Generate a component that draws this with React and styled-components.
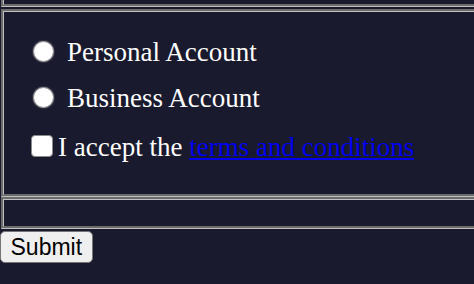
import styled, { createGlobalStyle } from "styled-components";

const GlobalStyle = createGlobalStyle`
  html, body {
    margin: 0;
    padding: 0;
    background: #1a1a2e;
    overflow: hidden;
  }
  body {
    font-family: "Liberation Serif", "Times New Roman", serif;
    color: #ffffff;
  }
`;

const Page = styled.form`
  width: 100%;
  display: flex;
  flex-direction: column;
  align-items: flex-start;
`;

// the section above is cut off by the screenshot, only its bottom edge shows
// right edges of the sections fall outside the shot, so no right border
const PrevSection = styled.div`
  align-self: stretch;
  height: 4px;
  margin-left: 1px;
  border-left: 3px groove #c0c0c0;
  border-bottom: 3px groove #c0c0c0;
`;

const Section = styled.fieldset`
  align-self: stretch;
  margin: ${(p) => p.$top || 0}px 0 0 1px;
  padding: ${(p) => (p.$empty ? "0" : "25px 0 31px 27px")};
  height: ${(p) => (p.$empty ? "26px" : "auto")};
  border: 3px groove #c0c0c0;
  border-right: none;
  min-width: 0;
  display: flex;
  flex-direction: column;
`;

const Option = styled.label`
  display: flex;
  align-items: center;
  gap: ${(p) => p.$gap}px;
  margin-top: ${(p) => p.$top || 0}px;
  height: 31px;
  font-size: 27px;
  line-height: 31px;
  cursor: pointer;
`;

const Radio = styled.input.attrs({ type: "radio" })`
  appearance: none;
  box-sizing: border-box;
  width: 21px;
  height: 21px;
  margin: 0 0 3px 2px;
  border-radius: 50%;
  background: #ffffff;
  border: 1.5px solid #8a8a8a;
  box-shadow: 0 0 1.5px rgba(255, 255, 255, 0.6);
  flex-shrink: 0;
`;

const Checkbox = styled.input.attrs({ type: "checkbox" })`
  appearance: none;
  box-sizing: border-box;
  width: 22px;
  height: 22px;
  margin: 0 0 4px 0;
  border-radius: 4px;
  background: #ffffff;
  border: 1.5px solid #8a8a8a;
  flex-shrink: 0;
`;

const Link = styled.a`
  color: #0000ee;
  text-decoration: underline;
`;

const SubmitButton = styled.button`
  margin-top: 2px;
  height: 32px;
  padding: 0 9.5px;
  font-family: "Liberation Sans", Arial, sans-serif;
  font-size: 23px;
  color: #000000;
  background: #efefef;
  border: 1.7px solid #767676;
  border-radius: 5px;
`;

export default function App() {
  return (
    <>
      <GlobalStyle />
      <Page onSubmit={(e) => e.preventDefault()}>
        <PrevSection />
        <Section $top={2}>
          <Option $gap={13}>
            <Radio name="account" value="personal" />
            Personal Account
          </Option>
          <Option $gap={13} $top={15}>
            <Radio name="account" value="business" />
            Business Account
          </Option>
          <Option $gap={5} $top={18}>
            <Checkbox name="terms" />
            <span>
              I accept the <Link href="#terms">terms and conditions</Link>
            </span>
          </Option>
        </Section>
        <Section $empty />
        <SubmitButton type="submit">Submit</SubmitButton>
      </Page>
    </>
  );
}
